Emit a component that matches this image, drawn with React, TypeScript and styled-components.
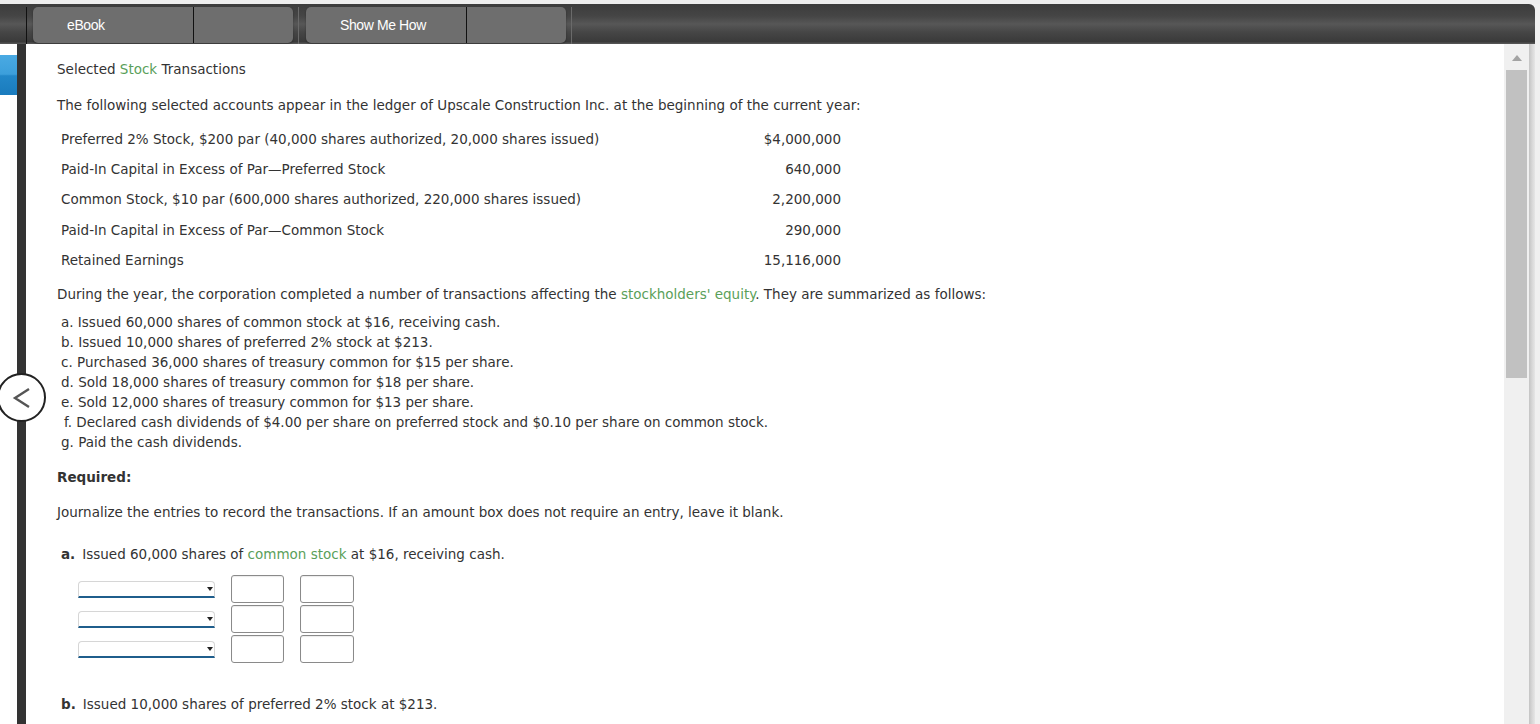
import React from "react";
import styled, { createGlobalStyle } from "styled-components";

const Global = createGlobalStyle`
  html, body { margin: 0; padding: 0; background: #f0f0f0; overflow: hidden; }
  body { font-family: "DejaVu Sans", Verdana, sans-serif; }
`;

const Page = styled.div`
  width: 1540px;
  height: 724px;
  display: flex;
  flex-direction: column;
  background: #f0f0f0;
  position: relative;
  overflow: hidden;
`;

const TopGap = styled.div`
  height: 4px;
  background: #eeeeee;
`;

const Toolbar = styled.div`
  width: 1535px;
  height: 40px;
  display: flex;
  align-items: stretch;
  border-top-right-radius: 6px;
  background: linear-gradient(
    to bottom,
    #3c3c3c 0%,
    #454545 30%,
    #575757 50%,
    #464646 70%,
    #3a3a3a 94%,
    #5a5a5a 100%
  );
  padding-left: 26px;
  box-sizing: border-box;
`;

const Sep = styled.div<{ $light?: boolean }>`
  width: 1px;
  margin-top: 3px;
  background: ${(p) => (p.$light ? "#6a6a6a" : "#111")};
`;

const TabButton = styled.div<{ $ml: number }>`
  margin-left: ${(p) => p.$ml}px;
  margin-right: 5px;
  margin-top: 3px;
  margin-bottom: 1px;
  width: 260px;
  display: flex;
  background: #6e6e6e;
  border-radius: 5px;
  box-shadow: 0 1px 2px rgba(0, 0, 0, 0.35);
`;

const TabMain = styled.div`
  width: 161px;
  border-right: 1px solid #111;
  display: flex;
  align-items: center;
  padding-left: 34px;
  box-sizing: border-box;
  font-family: "Liberation Sans", Arial, sans-serif;
  font-size: 14px;
  letter-spacing: -0.4px;
  color: #fff;
`;

const Main = styled.div`
  flex: 1;
  display: flex;
  min-height: 0;
`;

const LeftRail = styled.div`
  width: 17px;
  background: #fff;
  padding-top: 11px;
  box-sizing: border-box;
`;

const BlueTab = styled.div`
  height: 40px;
  background: linear-gradient(
    to bottom,
    #4aaae3 0%,
    #3c9fdb 48%,
    #2287c8 52%,
    #1a7bbd 100%
  );
`;

const DarkBar = styled.div`
  width: 9px;
  background: #333;
`;

const Content = styled.div`
  flex: 1;
  background: #fff;
  padding-left: 31px;
  color: #333;
  font-size: 13.5px;
  line-height: 20px;
  overflow: hidden;
`;

const Para = styled.div<{ $mt: number; $bold?: boolean }>`
  margin-top: ${(p) => p.$mt}px;
  font-weight: ${(p) => (p.$bold ? 700 : 400)};
  white-space: nowrap;
`;

const Term = styled.span`
  color: #5a9f5a;
`;

const Ledger = styled.div`
  margin-top: 9px;
  width: 788px;
  display: grid;
  grid-template-columns: 1fr auto;
  grid-auto-rows: 30.2px;
  align-items: center;
`;

const LedgerCell = styled.div<{ $right?: boolean }>`
  padding: 0 4px;
  text-align: ${(p) => (p.$right ? "right" : "left")};
  white-space: nowrap;
`;

const List = styled.div`
  margin-top: 8px;
  padding-left: 4px;
  display: flex;
  flex-direction: column;
`;

const ListItem = styled.div<{ $indent?: number }>`
  height: 20px;
  padding-left: ${(p) => p.$indent || 0}px;
  white-space: nowrap;
`;

const PartLabel = styled.div<{ $mt: number }>`
  margin-top: ${(p) => p.$mt}px;
  padding-left: 4px;
  white-space: nowrap;
`;

const Letter = styled.b`
  font-weight: 700;
  margin-right: 7px;
`;

const EntryGrid = styled.div`
  margin-top: 11px;
  margin-left: 21px;
  display: flex;
  flex-direction: column;
  gap: 2px;
`;

const EntryRow = styled.div`
  display: flex;
  align-items: center;
  height: 28px;
`;

const Select = styled.div`
  width: 137px;
  height: 17px;
  margin-top: 2px;
  box-sizing: border-box;
  border: 1px solid #d6d6d6;
  border-bottom: 2px solid #1f5e8c;
  border-radius: 4px 4px 0 0;
  position: relative;
  margin-right: 16px;
`;

const Caret = styled.div`
  position: absolute;
  right: 1px;
  top: 5px;
  width: 0;
  height: 0;
  border-left: 3.5px solid transparent;
  border-right: 3.5px solid transparent;
  border-top: 4px solid #222;
`;

const AmountBox = styled.div<{ $w: number }>`
  width: ${(p) => p.$w}px;
  height: 28px;
  box-sizing: border-box;
  border: 1px solid #8a8a8a;
  border-radius: 3px;
  margin-right: 16px;
  box-shadow: inset 0 1px 1px rgba(0, 0, 0, 0.08);
`;

const Scrollbar = styled.div`
  width: 25px;
  background: #f0f0f0;
  display: flex;
  flex-direction: column;
  align-items: center;
`;

const ScrollArrow = styled.div`
  margin-top: 11px;
  width: 0;
  height: 0;
  border-left: 5px solid transparent;
  border-right: 5px solid transparent;
  border-bottom: 6px solid #a3a3a3;
`;

const Thumb = styled.div`
  margin-top: 9px;
  width: 21px;
  height: 308px;
  background: #c1c1c1;
`;

const Shadow = styled.div`
  width: 6px;
  background: linear-gradient(to right, #c4c4c4, #dadada 60%, #e6e6e6);
`;

const RightGap = styled.div`
  width: 5px;
  background: #f0f0f0;
`;

const BackCircle = styled.div`
  position: absolute;
  left: -3px;
  top: 373px;
  width: 49px;
  height: 49px;
  box-sizing: border-box;
  border-radius: 50%;
  border: 2px solid #222;
  background: #fff;
  display: flex;
  align-items: center;
  justify-content: center;
`;

const ledger: [string, string][] = [
  ["Preferred 2% Stock, $200 par (40,000 shares authorized, 20,000 shares issued)", "$4,000,000"],
  ["Paid-In Capital in Excess of Par\u2014Preferred Stock", "640,000"],
  ["Common Stock, $10 par (600,000 shares authorized, 220,000 shares issued)", "2,200,000"],
  ["Paid-In Capital in Excess of Par\u2014Common Stock", "290,000"],
  ["Retained Earnings", "15,116,000"],
];

const items: [string, number][] = [
  ["a. Issued 60,000 shares of common stock at $16, receiving cash.", 0],
  ["b. Issued 10,000 shares of preferred 2% stock at $213.", 0],
  ["c. Purchased 36,000 shares of treasury common for $15 per share.", 0],
  ["d. Sold 18,000 shares of treasury common for $18 per share.", 0],
  ["e. Sold 12,000 shares of treasury common for $13 per share.", 0],
  ["f. Declared cash dividends of $4.00 per share on preferred stock and $0.10 per share on common stock.", 3],
  ["g. Paid the cash dividends.", 0],
];

export default function App() {
  return (
    <Page>
      <Global />
      <TopGap />
      <Toolbar>
        <Sep />
        <TabButton $ml={6}>
          <TabMain>eBook</TabMain>
        </TabButton>
        <Sep $light />
        <TabButton $ml={7}>
          <TabMain>Show Me How</TabMain>
        </TabButton>
        <Sep $light />
      </Toolbar>
      <Main>
        <LeftRail>
          <BlueTab />
        </LeftRail>
        <DarkBar />
        <Content>
          <Para $mt={15}>
            Selected <Term>Stock</Term> Transactions
          </Para>
          <Para $mt={16}>
            The following selected accounts appear in the ledger of Upscale Construction Inc. at the beginning of the current year:
          </Para>
          <Ledger>
            {ledger.map(([l, v]) => (
              <React.Fragment key={l}>
                <LedgerCell>{l}</LedgerCell>
                <LedgerCell $right>{v}</LedgerCell>
              </React.Fragment>
            ))}
          </Ledger>
          <Para $mt={9}>
            During the year, the corporation completed a number of transactions affecting the{" "}
            <Term>stockholders' equity</Term>. They are summarized as follows:
          </Para>
          <List>
            {items.map(([t, i]) => (
              <ListItem key={t} $indent={i}>
                {t}
              </ListItem>
            ))}
          </List>
          <Para $mt={15} $bold>
            Required:
          </Para>
          <Para $mt={15}>
            Journalize the entries to record the transactions. If an amount box does not require an entry, leave it blank.
          </Para>
          <PartLabel $mt={22}>
            <Letter>a.</Letter>Issued 60,000 shares of <Term>common stock</Term> at $16, receiving cash.
          </PartLabel>
          <EntryGrid>
            {[0, 1, 2].map((r) => (
              <EntryRow key={r}>
                <Select>
                  <Caret />
                </Select>
                <AmountBox $w={53} />
                <AmountBox $w={54} />
              </EntryRow>
            ))}
          </EntryGrid>
          <PartLabel $mt={31}>
            <Letter>b.</Letter>Issued 10,000 shares of preferred 2% stock at $213.
          </PartLabel>
        </Content>
        <Scrollbar>
          <ScrollArrow />
          <Thumb />
        </Scrollbar>
        <Shadow />
        <RightGap />
      </Main>
      <BackCircle>
        <svg width="20" height="24" viewBox="0 0 20 24">
          <polyline points="17,3 3,12 17,21" fill="none" stroke="#555" strokeWidth="2.4" />
        </svg>
      </BackCircle>
    </Page>
  );
}
